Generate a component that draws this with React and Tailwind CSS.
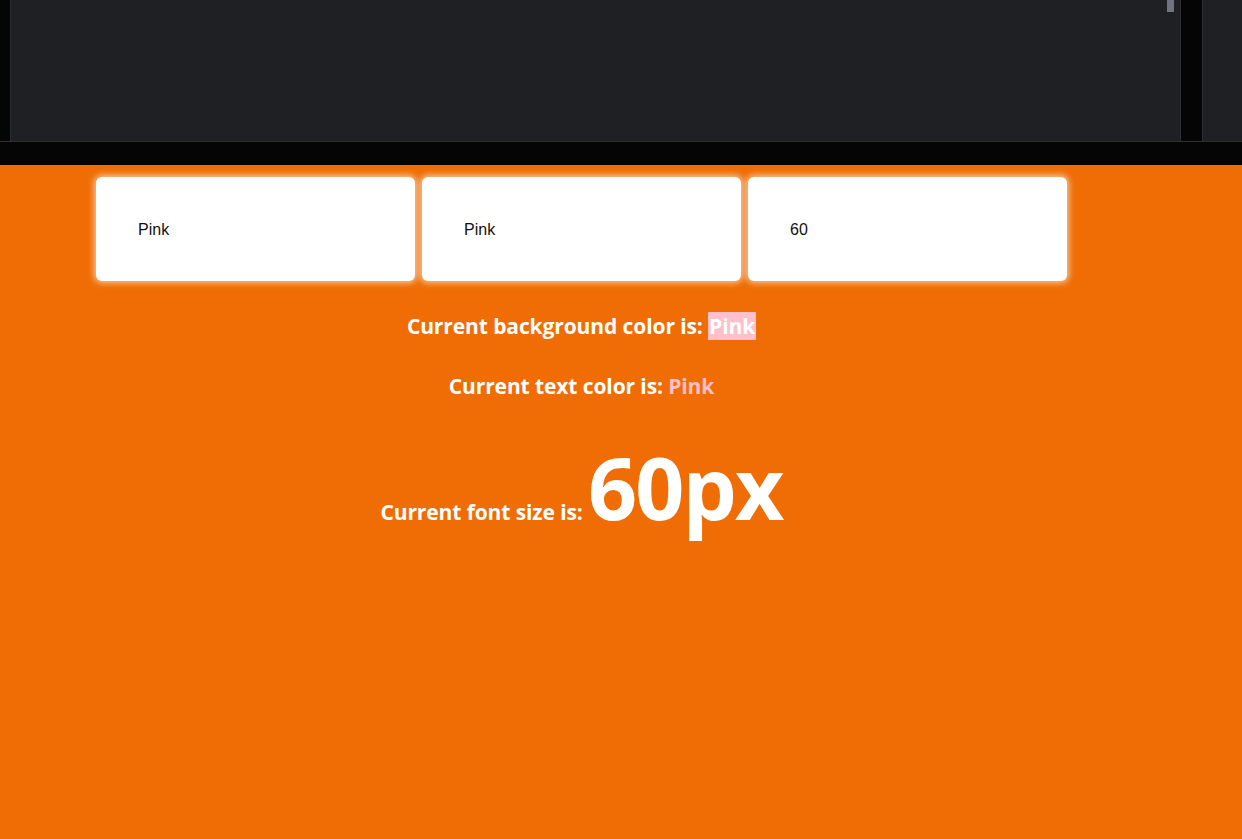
import { useState } from 'react';

const FONT = { fontFamily: '"Open Sans", "Noto Sans", sans-serif' };

function Field({ value, onChange }) {
  return (
    <input
      value={value}
      onChange={(e) => onChange(e.target.value)}
      className="h-[104px] w-[319px] rounded-md bg-white pl-[42px] pt-[2px] text-[16px] text-[#111] shadow-[0_0_6px_2px_rgba(255,255,255,0.6)] outline-none"
      style={{ fontFamily: '"Liberation Sans", Arial, sans-serif' }}
    />
  );
}

export default function App() {
  const [bg, setBg] = useState('Pink');
  const [color, setColor] = useState('Pink');
  const [size, setSize] = useState('60');

  return (
    <div className="flex h-[839px] w-[1242px] flex-col overflow-hidden bg-[#ef6d04]">
      <div className="flex h-[165px] shrink-0 flex-col bg-[#050505]">
        <div className="flex h-[142px] border-b border-[#2e2f33]">
          <div className="w-[10px] bg-[#050505]" />
          <div className="relative flex-1 border-l border-[#2a2b2f] bg-[#1f2024]">
            <div className="absolute right-[6px] top-0 h-[12px] w-[7px] bg-[#6f7382]" />
          </div>
          <div className="w-[22px] border-l border-[#2e2f33] bg-[#050505]" />
          <div className="w-[40px] border-l border-[#2e2f33] bg-[#1f2024]" />
        </div>
      </div>

      <div className="ml-[96px] w-[971px] pt-[12px]" style={FONT}>
        <div className="flex gap-[7px]">
          <Field value={bg} onChange={setBg} />
          <Field value={color} onChange={setColor} />
          <Field value={size} onChange={setSize} />
        </div>

        <p className="mt-[31px] text-center text-[21px] font-bold leading-[28px] tracking-[-0.1px] text-white">
          Current background color is: <span className="bg-[#ffc0cb] px-[1px]">{bg}</span>
        </p>
        <p className="mt-[32px] text-center text-[21px] font-bold leading-[28px] tracking-[-0.1px] text-white">
          Current text color is: <span className="text-[#ffc0cb]">{color}</span>
        </p>
        <p className="mt-[34px] text-center text-[21px] font-bold leading-[106px] tracking-[-0.1px] text-white">
          Current font size is: <span className="text-[86px] leading-[106px] tracking-[-2px]">{size}px</span>
        </p>
      </div>
    </div>
  );
}
